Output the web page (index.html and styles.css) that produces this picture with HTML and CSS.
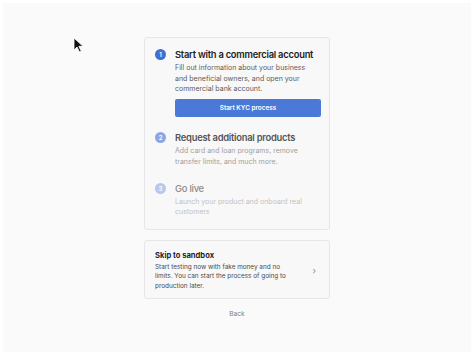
FILE: index.html
```html
<!DOCTYPE html>
<html lang="en">
<head>
    <meta charset="UTF-8">
    <title>Get started</title>
    <link rel="stylesheet" href="styles.css">
</head>
<body>
    <div class="frame">
        <!-- mouse pointer from the recording -->
        <svg class="cursor" width="11" height="16" viewBox="0 0 11 16">
            <path d="M1 1 L1 13 L4 10 L6.5 15 L8.3 14.2 L5.8 9.3 L10 9.3 Z" fill="#111" stroke="#fff" stroke-width="0.8"/>
        </svg>

        <div class="card steps">
            <div class="step active">
                <div class="num">1</div>
                <div class="step-body">
                    <h2>Start with a commercial account</h2>
                    <p>Fill out information about your business and beneficial owners, and open your commercial bank account.</p>
                    <button class="primary">Start KYC process</button>
                </div>
            </div>
            <div class="step next">
                <div class="num">2</div>
                <div class="step-body">
                    <h2>Request additional products</h2>
                    <p>Add card and loan programs, remove transfer limits, and much more.</p>
                </div>
            </div>
            <div class="step later">
                <div class="num">3</div>
                <div class="step-body">
                    <h2>Go live</h2>
                    <p>Launch your product and onboard real customers</p>
                </div>
            </div>
        </div>

        <div class="card sandbox">
            <div class="sandbox-text">
                <h3>Skip to sandbox</h3>
                <p>Start testing now with fake money and no limits. You can start the process of going to production later.</p>
            </div>
            <span class="chevron">&#8250;</span>
        </div>

        <div class="back">Back</div>
    </div>
</body>
</html>
```

FILE: styles.css
```css
body {
    margin: 0;
    background-color: #ffffff;
    font-family: Inter, "Noto Sans", sans-serif;
}
.frame {
    margin: 3px;
    height: 349px;
    background-color: #fafafa;
    position: relative;
    display: flex;
    flex-direction: column;
    align-items: center;
    padding-top: 34px;
    box-sizing: border-box;
}
.cursor {
    position: absolute;
    top: 34px;
    left: 70px;
}
.card {
    width: 186px;
    box-sizing: border-box;
    background-color: #f8f8f8;
    border: 1px solid #e6e6e6;
    border-radius: 3px;
}
.steps {
    padding: 9px 10px 11px 10px;
}
.step {
    display: flex;
    gap: 9px;
}
.step + .step {
    margin-top: 13px;
}
.num {
    width: 11px;
    height: 11px;
    border-radius: 50%;
    background-color: #3f6fd3;
    color: #ffffff;
    font-size: 6px;
    font-weight: 600;
    display: flex;
    align-items: center;
    justify-content: center;
    margin-top: 2px;
    flex-shrink: 0;
}
.step h2 {
    margin: 0 0 1px 0;
    font-size: 9.4px;
    font-weight: 600;
    letter-spacing: -0.25px;
    line-height: 15px;
    white-space: nowrap;
    color: #222222;
}
.step p {
    margin: 0;
    max-width: 136px;
    font-size: 7px;
    line-height: 10.7px;
    color: #5c5c5c;
}
.next .num {
    background-color: #8ba6e2;
}
.next h2 {
    color: #555555;
}
.next p {
    color: #a0a0a0;
}
.later .num {
    background-color: #b7c8ee;
}
.later h2 {
    color: #8a8a8a;
    font-weight: 500;
}
.later p {
    color: #c2c2c2;
}
.primary {
    display: block;
    width: 146px;
    height: 18px;
    margin-top: 4px;
    border: none;
    border-radius: 2px;
    background-color: #4a79d8;
    color: #ffffff;
    font-family: inherit;
    font-size: 6.4px;
    font-weight: 600;
    padding: 0;
}
.sandbox {
    margin-top: 10px;
    display: flex;
    align-items: center;
    padding: 9px 10px 7px 10px;
}
.sandbox-text {
    flex: 1;
}
.sandbox h3 {
    margin: 0 0 2px 0;
    font-size: 7.6px;
    font-weight: 700;
    line-height: 11px;
    color: #1e1e1e;
}
.sandbox p {
    margin: 0;
    width: 135px;
    font-size: 6.4px;
    line-height: 9.3px;
    color: #4a4a4a;
}
.chevron {
    font-size: 9px;
    color: #888888;
    margin-right: 3px;
}
.back {
    margin-top: 11px;
    font-size: 6.6px;
    color: #808080;
}
```
